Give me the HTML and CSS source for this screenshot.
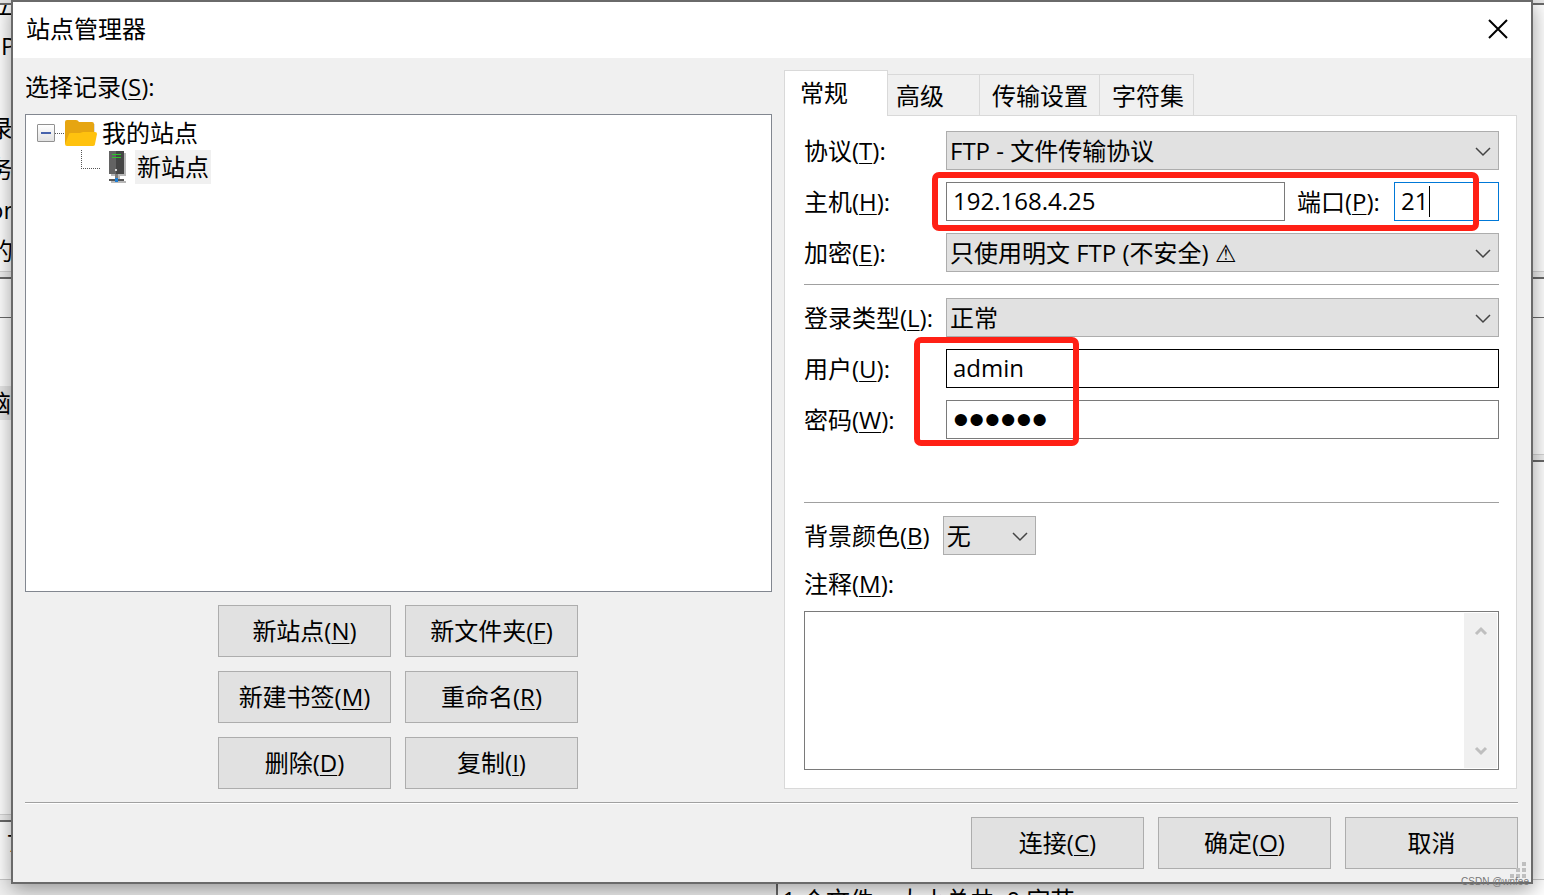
FILE: index.html
```html
<!DOCTYPE html>
<html lang="zh-CN">
  <head>
    <meta charset="UTF-8" />
    <meta name="viewport" content="width=device-width, initial-scale=1.0" />
    <title>站点管理器</title>
    <link rel="stylesheet" href="styles.css">
  </head>
  <body>
    <!-- Main window behind the dialog -->
    <div class="main-window">
      <div class="log">
        <p class="cut">立</p>
        <p class="indent">P</p>
        <p></p>
        <p class="cut">录</p>
        <p class="cut">务</p>
        <p class="cut">on</p>
        <p class="cut">的</p>
      </div>
      <div class="splitter"></div>
      <div class="path-bar"></div>
      <div class="panes">
        <div class="local-tree"><span>脑</span></div>
        <div class="remote">
          <div class="remote-tree"></div>
          <div class="splitter"></div>
          <div class="remote-files"></div>
        </div>
      </div>
      <div class="splitter left-only"></div>
      <div class="file-count left-count">7</div>
      <div class="bottom-row">
        <div class="bottom-left"></div>
        <div class="bottom-right">1 个文件。大小总共: 0 字节</div>
      </div>
    </div>

    <!-- Site manager dialog -->
    <div class="dialog" role="dialog" aria-labelledby="dialog-title">
      <div class="title-bar">
        <h1 id="dialog-title">站点管理器</h1>
        <button type="button" class="close" aria-label="关闭">
          <svg width="20" height="20" viewBox="0 0 20 20">
            <path d="M1 1L19 19M19 1L1 19" stroke="#000" stroke-width="2" fill="none" />
          </svg>
        </button>
      </div>

      <div class="content">
        <div class="left">
          <div class="caption" id="tree-label">选择记录(<u>S</u>):</div>
          <ul class="tree" role="tree" aria-labelledby="tree-label">
            <li class="tree-root" role="treeitem">
              <button type="button" class="toggle" aria-label="折叠"></button>
              <span class="branch"></span>
              <svg class="folder" width="34" height="30" viewBox="0 0 34 30">
                <path d="M3 6h28v21H4z" fill="#c9c9c9" opacity=".6" />
                <path d="M1 4q0-2 2-2h9q2 0 3 2h13q2 0 2 2v20H1z" fill="#e6a511" />
                <path d="M5 16q0-1 2-1h9l3-1h12q2 0 2 2l-2 10q0 2-2 2H3q-2 0-2-2z" fill="#ffc20e" />
              </svg>
              <span class="root-name">我的站点</span>
            </li>
            <li class="tree-child" role="treeitem">
              <span class="elbow"></span>
              <svg class="server" width="20" height="34" viewBox="0 0 20 34">
                <path d="M4 3h15v23H4zM10 26h3v4h-3zM4 31h15v2H4z" fill="#b8b8b8" />
                <path d="M2 1h8v23H2z" fill="#636363" />
                <path d="M9 1h8v23H9z" fill="#454545" />
                <path d="M5 4h9v1H5zM5 7h9v1H5z" fill="#2bc52b" />
                <circle cx="9" cy="20" r="1" fill="#fff" />
                <path d="M8 24h3v4H8z" fill="#7d7d7d" />
                <path d="M2 29h15v2H2z" fill="#555" />
                <path d="M8 28h3v4H8z" fill="#1e7fd6" />
              </svg>
              <span class="child-name">新站点</span>
            </li>
          </ul>
          <div class="tree-buttons">
            <button type="button" class="btn">新站点(<u>N</u>)</button>
            <button type="button" class="btn">新文件夹(<u>F</u>)</button>
            <button type="button" class="btn">新建书签(<u>M</u>)</button>
            <button type="button" class="btn">重命名(<u>R</u>)</button>
            <button type="button" class="btn">删除(<u>D</u>)</button>
            <button type="button" class="btn">复制(<u>I</u>)</button>
          </div>
        </div>

        <div class="right">
          <div class="tabs" role="tablist">
            <button type="button" class="tab active" role="tab" aria-selected="true">常规</button>
            <button type="button" class="tab narrow" role="tab">高级</button>
            <button type="button" class="tab" role="tab">传输设置</button>
            <button type="button" class="tab last" role="tab">字符集</button>
          </div>

          <form class="panel">
            <div class="row">
              <label for="protocol">协议(<u>T</u>):</label>
              <div class="combo">
                <select id="protocol">
                  <option>FTP - 文件传输协议</option>
                </select>
                <svg class="chevron" width="16" height="10" viewBox="0 0 16 10"><path d="M1 1L8 8L15 1" /></svg>
              </div>
            </div>
            <div class="row">
              <label for="host">主机(<u>H</u>):</label>
              <div class="host-fields">
                <input type="text" id="host" class="host" value="192.168.4.25" />
                <label for="port">端口(<u>P</u>):</label>
                <div class="port-box">
                  <input type="text" id="port" class="port" value="21" />
                  <span class="caret"></span>
                </div>
              </div>
              <div class="mark mark-host"></div>
            </div>
            <div class="row">
              <label for="encryption">加密(<u>E</u>):</label>
              <div class="combo">
                <select id="encryption">
                  <option>只使用明文 FTP (不安全) ⚠</option>
                </select>
                <svg class="chevron" width="16" height="10" viewBox="0 0 16 10"><path d="M1 1L8 8L15 1" /></svg>
              </div>
            </div>
            <hr />
            <div class="row">
              <label for="logon">登录类型(<u>L</u>):</label>
              <div class="combo">
                <select id="logon">
                  <option>正常</option>
                </select>
                <svg class="chevron" width="16" height="10" viewBox="0 0 16 10"><path d="M1 1L8 8L15 1" /></svg>
              </div>
            </div>
            <div class="login">
              <div class="row">
                <label for="user">用户(<u>U</u>):</label>
                <input type="text" id="user" class="user" value="admin" />
              </div>
              <div class="row">
                <label for="password">密码(<u>W</u>):</label>
                <input type="password" id="password" class="password" value="123456" />
              </div>
              <div class="mark mark-login"></div>
            </div>
            <hr />
            <div class="color-row">
              <label for="color">背景颜色(<u>B</u>)</label>
              <div class="combo">
                <select id="color">
                  <option>无</option>
                </select>
                <svg class="chevron" width="16" height="10" viewBox="0 0 16 10"><path d="M1 1L8 8L15 1" /></svg>
              </div>
            </div>
            <label for="comments" class="comments-label">注释(<u>M</u>):</label>
            <div class="comments">
              <textarea id="comments"></textarea>
              <div class="scrollbar">
                <svg width="14" height="10" viewBox="0 0 14 10"><path d="M2 8L7 3L12 8" /></svg>
                <svg width="14" height="10" viewBox="0 0 14 10"><path d="M2 2L7 7L12 2" /></svg>
              </div>
            </div>
          </form>
        </div>
      </div>

      <div class="footer">
        <button type="button" class="btn">连接(<u>C</u>)</button>
        <button type="button" class="btn">确定(<u>O</u>)</button>
        <button type="button" class="btn">取消</button>
      </div>

      <svg class="grip" width="16" height="16" viewBox="0 0 16 16">
        <path d="M12 0h4v4h-4zM6 6h4v4H6zM12 6h4v4h-4zM0 12h4v4H0zM6 12h4v4H6zM12 12h4v4h-4z" fill="#bfbfbf" />
      </svg>
      <span class="watermark">CSDN @wnfee</span>
    </div>
  </body>
</html>
```

FILE: styles.css
```css
* {
  box-sizing: border-box;
}

body,
button,
input,
select,
textarea {
  font-family: "Open Sans", "DejaVu Sans", "Noto Sans CJK SC", sans-serif;
  font-size: 24px;
  line-height: 34px;
  color: #000;
}

body {
  margin: 0;
  min-height: 100vh;
  position: relative;
  overflow: hidden;
  background-color: #f0f0f0;
}

h1,
p,
ul {
  margin: 0;
  padding: 0;
  font-size: 24px;
  font-weight: 400;
}

u {
  text-decoration-thickness: 1px;
  text-underline-offset: 3px;
}

/* Window in the background */
.main-window {
  position: absolute;
  inset: 0;
  display: flex;
  flex-direction: column;
  border-top: 3px solid #e8e8e8;
  background-color: #fff;
}

.log {
  height: 268px;
  border-top: 2px solid #6a6a6a;
  overflow: hidden;
}

.log p {
  height: 41px;
  line-height: 41px;
}

.log p:first-child {
  margin-top: -21px;
}

.log .cut {
  margin-left: -11px;
}

.log .indent {
  padding-left: 1px;
}

.splitter {
  height: 8px;
  flex-shrink: 0;
  background-color: #f0f0f0;
  border-top: 1px solid #d5d5d5;
  border-bottom: 2px solid #6a6a6a;
}

.path-bar {
  height: 39px;
  border-bottom: 1px solid #6a6a6a;
}

.panes {
  height: 496px;
  display: grid;
  grid-template-columns: 1fr 1fr;
}

.local-tree {
  padding-top: 68px;
}

.local-tree span {
  display: inline-block;
  margin-left: -13px;
  background-color: #e8e8e8;
}

.remote-tree {
  height: 136px;
}

.left-only {
  margin-right: 50%;
}

.file-count {
  height: 58px;
  padding-left: 7px;
  line-height: 42px;
  border-bottom: 1px solid #c8c8c8;
}

.bottom-row {
  flex: 1;
  display: grid;
  grid-template-columns: 1fr 1fr;
  background-color: #f0f0f0;
  overflow: hidden;
}

.bottom-right {
  height: 40px;
  margin-left: 4px;
  padding-left: 4px;
  border-left: 2px solid #6a6a6a;
  line-height: 40px;
  white-space: nowrap;
  background-color: #fff;
}

/* Dialog */
.dialog {
  position: relative;
  margin: 0 11px 0 11px;
  border: 2px solid #6a6a6a;
  background-color: #f0f0f0;
  box-shadow: 0 5px 20px rgba(0, 0, 0, 0.4);
}

.title-bar {
  display: flex;
  justify-content: space-between;
  align-items: center;
  height: 56px;
  padding: 0 23px 2px 13px;
  background-color: #fff;
}

.close {
  display: flex;
  padding: 0;
  border: none;
  background: none;
}

.content {
  display: grid;
  grid-template-columns: 747fr 733fr;
  gap: 12px;
  margin: 0 0 0 12px;
  padding: 12px 14px 13px 0;
}

.left {
  display: flex;
  flex-direction: column;
}

.tree {
  flex: 1;
  margin: 10px 0 13px;
  padding: 1px 0 0 11px;
  border: 1px solid #828790;
  background-color: #fff;
  list-style: none;
}

.tree li {
  display: flex;
  align-items: center;
  height: 34px;
}

.toggle {
  display: flex;
  align-items: center;
  justify-content: center;
  width: 18px;
  height: 18px;
  padding: 0;
  border: 1px solid #919191;
  border-radius: 1px;
  background: linear-gradient(#fff, #e2e2e2);
}

.toggle::before {
  content: "";
  width: 10px;
  height: 2px;
  background-color: #4763ac;
}

.branch {
  width: 9px;
  border-top: 1px dotted #555;
}

.root-name {
  margin-left: 4px;
}

.elbow {
  align-self: flex-start;
  width: 19px;
  height: 19px;
  margin: 0 7px 0 44px;
  border-left: 1px dotted #555;
  border-bottom: 1px dotted #555;
}

.child-name {
  margin-left: 8px;
  padding: 0 2px;
  background-color: #f0f0f0;
}

.tree-buttons {
  display: grid;
  grid-template-columns: 173px 173px;
  gap: 14px;
  justify-content: center;
  padding-right: 1px;
}

.btn {
  height: 52px;
  padding: 0;
  border: 1px solid #adadad;
  background-color: #e1e1e1;
}

.tabs {
  display: flex;
  align-items: flex-end;
  height: 46px;
  margin-bottom: -1px;
  position: relative;
}

.tab {
  height: 42px;
  padding: 2px 11px 0 12px;
  border: 1px solid #d9d9d9;
  border-right: none;
  background-color: #f0f0f0;
  text-align: left;
}

.tab.active {
  width: 104px;
  height: 46px;
  padding: 0 15px 2px;
  border-right: 1px solid #d9d9d9;
  border-bottom: none;
  background-color: #fff;
}

.tab.narrow {
  width: 91px;
  padding-left: 8px;
  border-left: none;
}

.tab.last {
  padding-right: 9px;
  border-right: 1px solid #d9d9d9;
}

.panel {
  padding: 15px 17px 18px 19px;
  border: 1px solid #d9d9d9;
  background-color: #fff;
}

.row {
  display: grid;
  grid-template-columns: 142px 1fr;
  align-items: center;
  position: relative;
  margin-bottom: 12px;
}

.combo {
  position: relative;
}

select {
  display: block;
  width: 100%;
  height: 39px;
  padding: 0 0 0 3px;
  border: 1px solid #adadad;
  border-radius: 0;
  background-color: #e1e1e1;
  appearance: none;
}

.chevron {
  position: absolute;
  right: 8px;
  top: 16px;
  fill: none;
  stroke: #444;
  stroke-width: 1.500;
  pointer-events: none;
}

input {
  width: 100%;
  height: 39px;
  padding: 0 6px 2px;
  border: 1px solid #7a7a7a;
  border-radius: 0;
  background-color: #fff;
  outline: none;
}

.host-fields {
  display: flex;
  align-items: center;
  gap: 12px;
}

.host-fields label {
  width: 85px;
}

.host {
  flex: 1;
  min-width: 0;
}

.port-box {
  position: relative;
  width: 105px;
}

.port {
  display: block;
  border-color: #0078d7;
}

.caret {
  position: absolute;
  left: 35px;
  top: 4px;
  width: 1px;
  height: 31px;
  background-color: #000;
}

.user {
  border-color: #000;
}

.password {
  padding-bottom: 0;
  font-family: "Liberation Sans", sans-serif;
  font-size: 45px;
}

/* Red highlight boxes */
.mark {
  position: absolute;
  border: 6px solid #ff2015;
  border-radius: 7px;
  pointer-events: none;
}

.mark-host {
  left: 128px;
  right: 20px;
  top: -10px;
  bottom: -10px;
}

.login {
  position: relative;
  margin-bottom: 63px;
}

.login .row:nth-child(2) {
  margin-bottom: 0;
}

.mark-login {
  left: 110px;
  width: 165px;
  top: -12px;
  bottom: -7px;
}

hr {
  height: 1px;
  margin: 0 0 13px;
  border: none;
  background-color: #a0a0a0;
}

.color-row {
  display: flex;
  align-items: center;
  gap: 13px;
}

.color-row .combo {
  width: 93px;
}

.comments-label {
  display: block;
  margin: 12px 0 10px;
}

.comments {
  display: flex;
  height: 159px;
  padding: 1px;
  border: 1px solid #7a7a7a;
}

textarea {
  flex: 1;
  padding: 0 6px;
  border: none;
  outline: none;
  resize: none;
}

.scrollbar {
  display: flex;
  flex-direction: column;
  justify-content: space-between;
  align-items: center;
  width: 33px;
  padding: 13px 0 12px;
  background-color: #f0f0f0;
}

.scrollbar path {
  fill: none;
  stroke: #bfbfbf;
  stroke-width: 3;
}

.footer {
  display: flex;
  justify-content: flex-end;
  gap: 14px;
  margin: 0 13px 0 12px;
  padding: 14px 0 13px;
  border-top: 1px solid #a0a0a0;
  box-shadow: inset 0 1px #fff;
}

.footer .btn {
  width: 173px;
}

.grip {
  position: absolute;
  right: 5px;
  bottom: 4px;
}

.watermark {
  position: absolute;
  right: 2px;
  bottom: -7px;
  font-family: "Liberation Sans", sans-serif;
  font-size: 10px;
  line-height: 14px;
  color: #777;
}
```
